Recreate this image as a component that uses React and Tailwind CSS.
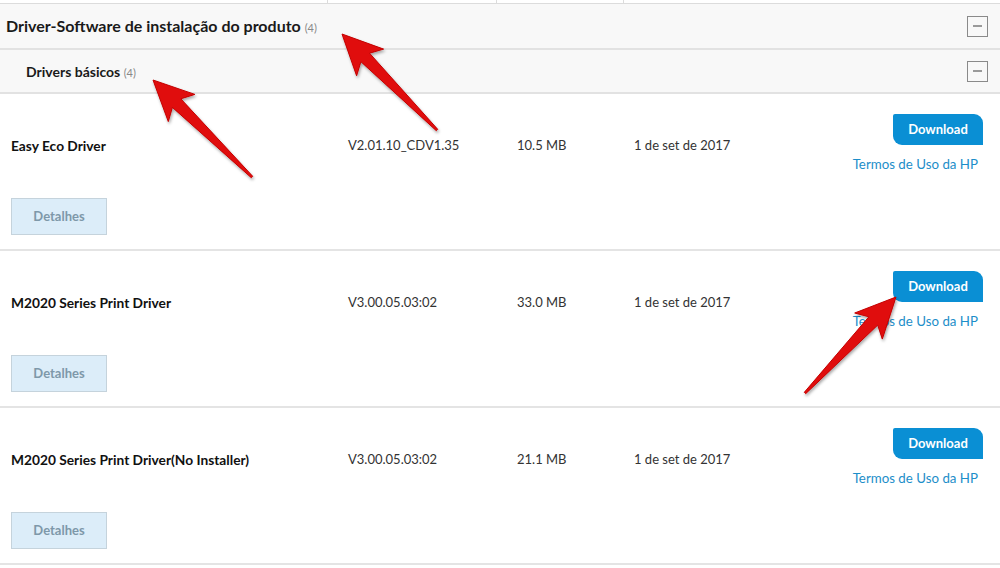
import React from 'react'

const drivers = [
  { name: 'Easy Eco Driver', version: 'V2.01.10_CDV1.35', size: '10.5 MB', date: '1 de set de 2017' },
  { name: 'M2020 Series Print Driver', version: 'V3.00.05.03:02', size: '33.0 MB', date: '1 de set de 2017' },
  { name: 'M2020 Series Print Driver(No Installer)', version: 'V3.00.05.03:02', size: '21.1 MB', date: '1 de set de 2017' },
]

// annotation arrows: tip and tail in page coords
const arrows = [
  { tip: [342, 34], tail: [437, 130] },
  { tip: [153, 80], tail: [252, 177] },
  { tip: [896, 297], tail: [805, 393] },
]

function arrowPoints({ tip, tail }) {
  const dx = tail[0] - tip[0]
  const dy = tail[1] - tip[1]
  const len = Math.hypot(dx, dy)
  const ux = dx / len
  const uy = dy / len
  const nx = -uy
  const ny = ux
  const at = (a, w) => [tip[0] + ux * a + nx * w, tip[1] + uy * a + ny * w]
  const pts = [
    at(0, 0),
    at(40, 19),
    at(33, 6),
    at(len, 1),
    at(len, -1),
    at(33, -6),
    at(40, -19),
  ]
  return pts.map((p) => p.map((v) => v.toFixed(1)).join(',')).join(' ')
}

function CollapseButton() {
  return (
    <div className="w-[21px] h-[21px] border-[1.5px] border-[#8a8a8a] flex items-center justify-center">
      <div className="w-[9px] h-[1.5px] bg-[#9a9a9a]" />
    </div>
  )
}

function DriverRow({ d }) {
  return (
    <div className="h-[157px] border-b-2 border-[#e4e4e4] bg-white pl-[11px] pt-[20px]">
      <div className="flex h-[64px] text-[13px]">
        <div className="w-[337px] flex items-center font-bold text-[13.75px] text-[#111]">{d.name}</div>
        <div className="w-[169px] flex items-center text-[#333]">{d.version}</div>
        <div className="w-[117px] flex items-center text-[#333]">{d.size}</div>
        <div className="flex-1 flex items-center text-[#333]">{d.date}</div>
        <div className="flex flex-col items-end pr-[17px]">
          <button className="w-[90px] h-[31px] bg-[#0a8fd4] text-white font-bold text-[13px] rounded-tr-[9px] rounded-bl-[9px] rounded-tl-[2px]">
            Download
          </button>
          <a className="mt-[10px] mr-[5px] text-[13.3px] text-[#1d8ec9] leading-[18px]">Termos de Uso da HP</a>
        </div>
      </div>
      <button className="mt-[20px] w-[96px] h-[37px] bg-[#dcedf9] border border-[#c5d3dc] text-[#7e98a9] font-bold text-[13px]">
        Detalhes
      </button>
    </div>
  )
}

export default function App() {
  return (
    <div className="relative w-[1000px] h-[568px] overflow-hidden bg-white" style={{ fontFamily: 'Lato, "Noto Sans", sans-serif' }}>
      {/* top strip with column dividers */}
      <div className="flex h-[4px] border-b border-[#dcdcdc]">
        <div className="w-[328px] border-r border-[#dcdcdc]" />
        <div className="w-[169px] border-r border-[#dcdcdc]" />
        <div className="w-[127px] border-r border-[#dcdcdc]" />
        <div className="flex-1" />
      </div>

      {/* section header */}
      <div className="h-[46px] bg-[#f8f8f8] border-b-2 border-[#e2e2e2] flex items-center justify-between pl-[6px] pr-[12px]">
        <div className="text-[16px] font-bold text-[#1a1a1a]">
          Driver-Software de instalação do produto <span className="text-[11px] font-normal text-[#888]">(4)</span>
        </div>
        <CollapseButton />
      </div>

      {/* sub header */}
      <div className="h-[44px] bg-[#f8f8f8] border-b-2 border-[#e2e2e2] flex items-center justify-between pl-[26px] pr-[12px]">
        <div className="text-[14px] font-bold text-[#1a1a1a]">
          Drivers básicos <span className="text-[11px] font-normal text-[#888]">(4)</span>
        </div>
        <CollapseButton />
      </div>

      {drivers.map((d) => (
        <DriverRow key={d.name} d={d} />
      ))}

      {/* annotation arrows */}
      <svg className="absolute inset-0 pointer-events-none" width="1000" height="568">
        <defs>
          <filter id="sh" x="-20%" y="-20%" width="140%" height="140%">
            <feDropShadow dx="1" dy="2" stdDeviation="1.5" floodColor="#000" floodOpacity="0.35" />
          </filter>
        </defs>
        {arrows.map((a, i) => (
          <polygon key={i} points={arrowPoints(a)} fill="#e00d0d" stroke="#c40000" strokeWidth="1" strokeLinejoin="round" filter="url(#sh)" />
        ))}
      </svg>
    </div>
  )
}
